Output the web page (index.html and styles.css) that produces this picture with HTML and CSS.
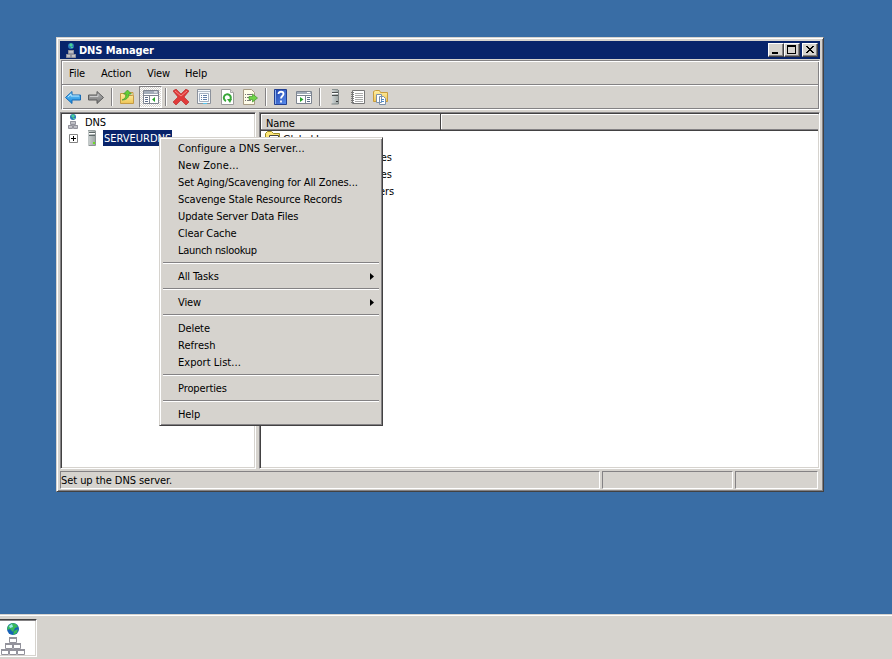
FILE: index.html
```html
<!DOCTYPE html>
<html lang="en">
<head>
<meta charset="utf-8">
<title>DNS Manager</title>
<link rel="stylesheet" href="styles.css">
</head>
<body>
<svg width="0" height="0" class="defs">
  <defs>
    <linearGradient id="blue" x2="0" y2="1"><stop offset="0" stop-color="#7fd0fa"/><stop offset="1" stop-color="#1185dc"/></linearGradient>
    <linearGradient id="gray" x2="0" y2="1"><stop offset="0" stop-color="#b5b5b5"/><stop offset="1" stop-color="#777"/></linearGradient>
    <linearGradient id="tower" x2="1" y2="0"><stop offset="0" stop-color="#cdd3d3"/><stop offset="1" stop-color="#99a19f"/></linearGradient>
    <linearGradient id="help" x2="1" y2="1"><stop offset="0" stop-color="#1c3fa8"/><stop offset="1" stop-color="#5b8ff0"/></linearGradient>
    <linearGradient id="folder" x2="0" y2="1"><stop offset="0" stop-color="#fff0a4"/><stop offset="1" stop-color="#eec455"/></linearGradient>
    <symbol id="dns" viewBox="0 0 16 16">
      <circle cx="6" cy="3" r="3" fill="#2878b8"/><path d="M4 2l2-2 2 2-2 2zM6 4h2v1H6z" fill="#49d294"/>
      <path d="M3.500 7.500h5v3h-5zM1.500 11.500h4v3h-4zM6.500 11.500h4v3h-4z" fill="#f4f4f6" stroke="#93939c"/><path d="M4 9.500h4M2 13.500h3M7 13.500h3" stroke="#b9bac2"/><path d="M3 8h6M1 12h10" stroke="#93939c"/>
    </symbol>
    <symbol id="server" viewBox="0 0 10 16">
      <path d="M1 1h8v14H1z" fill="url(#tower)"/><path d="M8.500 0.500v15h-7" fill="none" stroke="#8b9393"/><path d="M1.500 1v14" stroke="#c2c8c8"/><path d="M1 .5h7" stroke="#9aa2a2"/>
      <path d="M2 2.500h6M2 5.500h6" stroke="#5e6868"/><path d="M2 3.500h6" stroke="#fff"/><path d="M6 12h2v2H6z" fill="#6bde24"/>
    </symbol>
  </defs>
</svg>

<main class="window">
  <header class="titlebar">
    <svg class="title-icon" width="16" height="16"><use href="#dns"/></svg>
    <h1>DNS Manager</h1>
    <div class="controls">
      <span class="ctl"><svg width="14" height="12"><path d="M3 8h6v2H3z"/></svg></span>
      <span class="ctl"><svg width="14" height="12"><path fill-rule="evenodd" d="M2 1h9v9H2zM3 3v6h7V3z"/></svg></span>
      <span class="ctl close"><svg width="14" height="12"><path d="M3 2h2v1h1v1h2V3h1V2h2v1h-1v1H9v1H8v1h1v1h1v1h1v1H9V8H8V7H6v1H5v1H3V8h1V7h1V6h1V5H5V4H4V3H3z"/></svg></span>
    </div>
  </header>

  <section class="bars">
    <nav class="menubar"><span class="m-file">File</span><span class="m-action">Action</span><span class="m-view">View</span><span>Help</span></nav>
    <div class="toolbar">
      <span class="tool"><svg width="16" height="16"><path d="M.5 8.500L7 2.500v3.500h8.500v5H7v3.500z" fill="url(#blue)" stroke="#176bb5"/><path d="M3 8l3-3v2h8" fill="none" stroke="#b5e7ff"/></svg></span>
      <span class="tool"><svg width="16" height="16"><path d="M15.500 8.500L9 2.500v3.500H.5v5H9v3.500z" fill="url(#gray)" stroke="#5c5c5c"/><path d="M2 7.500h8V5" fill="none" stroke="#ccc"/></svg></span>
      <i class="sep"></i>
      <span class="tool"><svg width="16" height="16"><path d="M1.500 14.500V4.500h4l1 2h8v8z" fill="url(#folder)" stroke="#c49a45"/><path d="M8 3.500h6v3" fill="#fff2b5" stroke="#c49a45"/><path d="M3 11c3-1 4-3 4-6H4.500l4-4 4 4H10c0 4-3 6-7 6z" fill="#62ce35" stroke="#398c28" stroke-width=".6"/></svg></span>
      <span class="tool pressed"><svg width="16" height="16"><path d="M.5 1.500h15v13H.5z" fill="#fff" stroke="#7d8490"/><path d="M1 2h14v3H1z" fill="#a2acb9"/><path d="M11 3h3" stroke="#fff"/><path d="M1 6.500h14M6.500 7v7" stroke="#7d8490"/><path d="M2 8.500h3M2 10.500h3M2 12.500h3" stroke="#5b6c89"/><path d="M12 8v5L9 10.500z" fill="#26a32c"/></svg></span>
      <i class="sep"></i>
      <span class="tool"><svg width="16" height="16"><path d="M0 2l3-2 5 5 5-5 3 2-5 6 5 5-3 3-5-5-5 5-3-3 5-5z" fill="#e03a3a" stroke="#b42222" stroke-width=".6"/><path d="M2 2l6 5 6-5" fill="none" stroke="#f58a84"/></svg></span>
      <span class="tool"><svg width="16" height="16"><path d="M1.500 .5h13v14h-13z" fill="#f7f9fc" stroke="#8b919b"/><path d="M2 2.500h12" stroke="#b4bec9"/><path d="M3.500 4.500h9v8h-9z" fill="#fff" stroke="#a6b2c2"/><path d="M5 6.500h1M7 6.500h4M5 8.500h1M7 8.500h4M5 10.500h1M7 10.500h4" stroke="#627fa8"/><path d="M7 14h4v1H7z" fill="#54c6ed"/></svg></span>
      <span class="tool"><svg width="16" height="16"><path d="M2.500 .5h9l3 3v12h-12z" fill="#fff" stroke="#9b9b9b"/><path d="M11.500 .5v3h3" fill="#ddd" stroke="#aaa"/><path d="M7 12a3.500 3.500 0 1 1 4-1" fill="none" stroke="#38a638" stroke-width="2"/><path d="M8 10h5l-2 4z" fill="#38a638"/></svg></span>
      <span class="tool"><svg width="16" height="16"><path d="M1.500 .5h8l3 3v12h-11z" fill="#fffce9" stroke="#a79b83"/><path d="M3 5.500h1M5 5.500h5M3 8.500h1M5 8.500h4M3 11.500h1M5 11.500h4" stroke="#777"/><path d="M7 7.500h3.500V5l5 4-5 4v-2.500H7z" fill="#70d447" stroke="#40962d" stroke-width=".7"/></svg></span>
      <i class="sep"></i>
      <span class="tool"><svg width="16" height="16"><path d="M1.500 .5h12v15h-12z" fill="url(#help)" stroke="#223f91"/><path d="M2.500 1v14" stroke="#8bb0ee"/><path d="M5.500 5c0-3 5-3 5 0 0 2-2.500 2-2.500 4.500M8 11.500v2" fill="none" stroke="#fff" stroke-width="1.800"/></svg></span>
      <span class="tool"><svg width="16" height="16"><path d="M.5 2.500h15v12H.5z" fill="#fff" stroke="#7d8490"/><path d="M1 3h14v2H1z" fill="#a2acb9"/><path d="M11 3.500h3" stroke="#fff"/><path d="M1 6.500h14M9.500 7v7" stroke="#7d8490"/><path d="M11 8.500h3M11 10.500h3M11 12.500h3" stroke="#5b6c89"/><path d="M4 8v5l3.500-2.500z" fill="#26a32c"/></svg></span>
      <i class="sep"></i>
      <span class="tool"><svg width="16" height="16"><path d="M5 1h7v14H5z" fill="url(#tower)"/><path d="M11.500 1v14h-7" fill="none" stroke="#7b8383"/><path d="M5 .5h6" stroke="#8a9292"/><path d="M5 3.500h6M5 6.500h6" stroke="#4c5050"/><path d="M5 4.500h6" stroke="#fff"/><path d="M9 12h2v1H9z" fill="#333"/></svg></span>
      <span class="tool"><svg width="16" height="16"><path d="M2.500 1.500h12v13h-12z" fill="#fff" stroke="#777"/><path d="M5 4.500h8M5 6.500h8M5 8.500h8M5 10.500h8M5 12.500h8" stroke="#aaa"/><path d="M1 3.500h3M1 5.500h3M1 7.500h3M1 9.500h3M1 11.500h3M1 13.500h3" stroke="#777"/></svg></span>
      <span class="tool"><svg width="16" height="16"><path d="M.5 12.500v-10l2-1h4l1 2h7v9z" fill="url(#folder)" stroke="#c99d3c"/><path d="M3.500 5.500h5v8h-5zM6.500 7.500h4l2 2v6h-6z" fill="#fff" stroke="#7c91aa"/><path d="M8 10.500h3M8 12.500h3" stroke="#4e89c9"/></svg></span>
    </div>
  </section>

  <section class="panes">
    <div class="pane tree">
      <div class="node root"><svg width="16" height="16"><use href="#dns"/></svg><span>DNS</span></div>
      <div class="node child"><svg class="plus" width="9" height="9"><path d="M.5 .5h8v8h-8z" fill="#fff" stroke="#848484"/><path d="M2 4.500h5M4.500 2v5" stroke="#000"/></svg><svg class="srv" width="10" height="16"><use href="#server"/></svg><span class="selected">SERVEURDNS</span></div>
    </div>
    <div class="pane list">
      <div class="columns"><span class="column name">Name</span><span class="column rest"></span></div>
      <div class="record first"><svg width="16" height="16"><path d="M.5 14.500v-12l2-2h4l2 2h6v12z" fill="#ffe777" stroke="#9b8b24"/><path d="M4.500 4.500h9v9h-9z" fill="#fff" stroke="#444"/></svg><span>Global Logs</span></div>
      <div class="record">Forward Lookup Zones</div>
      <div class="record">Reverse Lookup Zones</div>
      <div class="record">Conditional Forwarders</div>
    </div>
  </section>

  <footer class="status"><span class="s-main">Set up the DNS server.</span><span class="s-mid"></span><span class="s-end"></span></footer>
</main>

<div class="context">
  <div class="item wide">Configure a DNS Server...</div>
  <div class="item wider">New Zone...</div>
  <div class="item">Set Aging/Scavenging for All Zones...</div>
  <div class="item">Scavenge Stale Resource Records</div>
  <div class="item">Update Server Data Files</div>
  <div class="item">Clear Cache</div>
  <div class="item tight">Launch nslookup</div>
  <hr>
  <div class="item sub"><span>All Tasks</span><svg width="4" height="7"><path d="M0 0l4 3.500L0 7z"/></svg></div>
  <hr>
  <div class="item sub"><span>View</span><svg width="4" height="7"><path d="M0 0l4 3.500L0 7z"/></svg></div>
  <hr>
  <div class="item">Delete</div>
  <div class="item wide">Refresh</div>
  <div class="item wide">Export List...</div>
  <hr>
  <div class="item">Properties</div>
  <hr>
  <div class="item">Help</div>
</div>

<footer class="taskbar">
  <div class="task"><svg width="26" height="34">
    <circle cx="13" cy="6" r="6" fill="#1762b6"/><path d="M8 3l4-3 4 1 2 3-3 1-2 4-3-3-3 1zM14 8l4-2-1 4-4 2z" fill="#39ba59"/><path d="M9 3l3-2 1 3-3 1z" fill="#9cecf2"/>
    <g fill="#fff" stroke="#93939c"><path d="M9.500 14.500h7v5h-7zM5.500 20.500h7v5h-7zM13.500 20.500h7v5h-7zM1.500 26.500h7v5h-7zM9.500 26.500h7v5h-7zM17.500 26.500h7v5h-7z"/><path d="M9 15h8M5 21h8M13 21h8M1 27h24" stroke-width="2"/></g>
  </svg></div>
</footer>
</body>
</html>
```
FILE: styles.css
```css
* { box-sizing: border-box; }
body {
  margin: 0;
  height: 659px;
  overflow: hidden;
  display: flex;
  flex-direction: column;
  justify-content: space-between;
  background: #396da5;
  color: #000;
  font: 11px/16px "DejaVu Sans Condensed", "DejaVu Sans", sans-serif;
  font-stretch: condensed;
  letter-spacing: -0.11px;
  white-space: nowrap;
}
svg { display: block; flex: none; }
.defs { position: absolute; }

.window {
  width: 768px;
  height: 455px;
  margin: 37px 0 0 56px;
  padding: 2px;
  display: flex;
  flex-direction: column;
  background: #d6d3ce;
  border: 1px solid;
  border-color: #d6d3ce #424142 #424142 #d6d3ce;
  box-shadow: inset 1px 1px #fff, inset -1px -1px #848284;
}
.titlebar {
  flex: none;
  height: 18px;
  margin: 1px 1px 0;
  padding: 0 2px 0 5px;
  display: flex;
  align-items: center;
  background: #08246b;
  color: #fff;
}
.title-icon { margin-top: 1px; }
h1 { margin: 1px 0 0 -2px; font-size: 11px; font-weight: bold; letter-spacing: -0.1px; }
.controls { margin-left: auto; display: flex; }
.ctl {
  width: 16px;
  height: 14px;
  background: #d6d3ce;
  border: 1px solid;
  border-color: #fff #424142 #424142 #fff;
  box-shadow: inset -1px -1px #848284;
}
.close { margin-left: 2px; }

.bars {
  flex: none;
  height: 50px;
  margin: 1px 1px 0 2px;
  border: 1px solid #848284;
  border-right-color: #fff;
  border-bottom-color: #fff;
  box-shadow: inset 1px 1px #fff, inset -1px -1px #848284;
}
.menubar {
  height: 24px;
  padding: 5px 0 0 7px;
  display: flex;
  border-bottom: 1px solid #848284;
}
.m-file { width: 32px; }
.m-action { width: 46px; }
.m-view { width: 38px; }
.toolbar {
  height: 23px;
  margin-right: 1px;
  display: flex;
  border-top: 1px solid #fff;
}
.tool {
  width: 23px;
  height: 22px;
  padding-right: 2px;
  display: flex;
  align-items: center;
  justify-content: center;
}
.pressed {
  padding-right: 0;
  background: repeating-conic-gradient(#fff 0 25%, #d6d3ce 0 50%) 0 0 / 2px 2px;
  border: 1px solid;
  border-color: #848284 #fff #fff #848284;
}
.sep {
  width: 2px;
  height: 18px;
  margin: 2px 3px;
  border-left: 1px solid #848284;
  border-right: 1px solid #fff;
}

.panes {
  flex: none;
  height: 357px;
  margin: 2px 1px 0;
  display: flex;
  gap: 3px;
}
.pane {
  overflow: hidden;
  background: #fff;
  border: 1px solid;
  border-color: #848284 #fff #fff #848284;
  padding: 1px;
  box-shadow: inset 1px 1px #424142, inset -1px -1px #d6d3ce;
}
.tree { width: 196px; }
.list { width: 561px; }
.node { height: 16px; display: flex; }
.root { padding-left: 5px; }
.root span { margin: 1px 0 0 2px; }
.child { padding-left: 7px; }
.plus { margin: 4px 9px 0 0; }
.srv { margin-right: 6px; }
.selected { padding: 1px 1px 0; line-height: 15px; background: #08246b; color: #fff; letter-spacing: 0; }
.columns { height: 17px; display: flex; }
.column {
  height: 17px;
  background: #d6d3ce;
  border-bottom: 1px solid #424142;
  box-shadow: inset 0 -1px #848284, inset 1px 1px #fff;
}
.name { width: 180px; padding: 2px 0 0 5px; border-right: 1px solid #424142; }
.rest { flex: 1; }
.record { height: 17px; padding: 2px 0 0 22px; line-height: 15px; letter-spacing: -0.15px; }
.first { display: flex; padding: 0 0 0 4px; gap: 2px; }
.first span { padding-top: 1px; letter-spacing: -0.25px; }

.status { flex: none; height: 18px; margin: 2px 3px 0 1px; display: flex; gap: 2px; }
.status span {
  border: 1px solid;
  border-color: #848284 #fff #fff #848284;
}
.s-main { width: 540px; padding-top: 1px; letter-spacing: -0.06px; }
.s-mid { width: 131px; }
.s-end { flex: 1; }

.context {
  position: absolute;
  left: 159px;
  top: 137px;
  width: 224px;
  height: 289px;
  padding: 2px;
  background: #d6d3ce;
  border: 1px solid;
  border-color: #d6d3ce #424142 #424142 #d6d3ce;
  box-shadow: inset 1px 1px #fff, inset -1px -1px #848284;
}
.item { height: 17px; padding: 1px 0 0 16px; }
.wide { letter-spacing: 0.04px; }
.wider { letter-spacing: 0.12px; }
.tight { letter-spacing: -0.3px; }
.sub { display: flex; align-items: center; justify-content: space-between; padding: 0 6px 0 16px; }
hr {
  height: 2px;
  margin: 3px 1px 4px;
  border: 0;
  border-top: 1px solid #848284;
  border-bottom: 1px solid #fff;
}

.taskbar {
  flex: none;
  height: 45px;
  display: flex;
  background: #d6d3ce;
  border-top: 1px solid #d6d3ce;
  box-shadow: inset 0 1px #fff;
  padding-top: 4px;
}
.task {
  width: 37px;
  height: 38px;
  padding-top: 3px;
  background: #fff;
  border: 1px solid #fff;
  border-top-color: #424142;
  border-left: 0;
  box-shadow: inset 0 1px #848284, inset -1px -1px #d6d3ce;
}
```
